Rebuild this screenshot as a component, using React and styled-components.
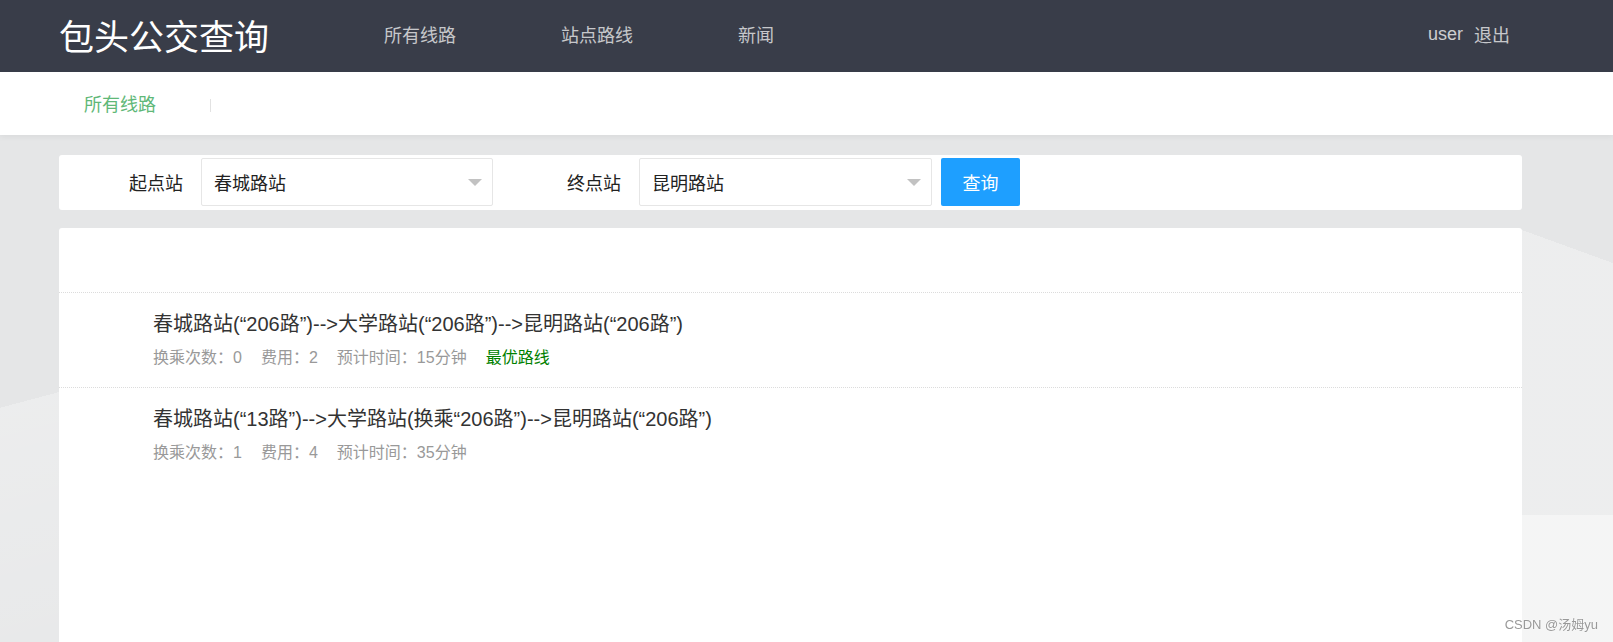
import React from 'react';
import styled, { createGlobalStyle } from 'styled-components';

const GlobalStyle = createGlobalStyle`
    html, body {
        margin: 0;
        padding: 0;
    }
    body {
        font-family: "Liberation Sans", "Noto Sans CJK SC", sans-serif;
        color: #333;
        min-height: 642px;
        background:
            linear-gradient(rgba(255, 255, 255, 0.6), rgba(255, 255, 255, 0.6)) right bottom / 91px 127px no-repeat,
            linear-gradient(200deg, transparent 48%, rgba(255, 255, 255, 0.3) 48%) right top / 91px 515px no-repeat,
            linear-gradient(165deg, transparent 62%, rgba(255, 255, 255, 0.28) 62%, rgba(255, 255, 255, 0.12) 100%) left top / 59px 642px no-repeat,
            #e5e6e7;
        background-attachment: fixed;
    }
`;

const Header = styled.header`
    height: 72px;
    background: #393d49;
    display: flex;
    align-items: center;
    padding: 0 103px 4px 59px;
    box-sizing: border-box;
`;

const Logo = styled.div`
    font-size: 35px;
    color: #fff;
    margin-right: 115px;
    white-space: nowrap;
`;

const Nav = styled.nav`
    display: flex;
    align-items: center;
    gap: 105px;
`;

const NavItem = styled.a`
    font-size: 18px;
    color: rgba(255, 255, 255, 0.72);
    text-decoration: none;
    cursor: pointer;
`;

const UserBox = styled.div`
    margin-left: auto;
    display: flex;
    align-items: center;
    gap: 11px;
    font-size: 18px;
    color: rgba(255, 255, 255, 0.75);
`;

const SubBar = styled.div`
    height: 63px;
    background: #fff;
    display: flex;
    align-items: center;
    padding-left: 84px;
    box-shadow: 0 2px 6px rgba(0, 0, 0, 0.05);
`;

const SubTab = styled.span`
    font-size: 18px;
    color: #5fb878;
    padding-bottom: 2px;
`;

const SubDivider = styled.span`
    width: 1px;
    height: 13px;
    background: #e2e2e2;
    margin-left: 54px;
    margin-top: 4px;
`;

const Main = styled.main`
    width: 1463px;
    margin-left: 59px;
    padding-top: 20px;
`;

const SearchCard = styled.form`
    height: 55px;
    background: #fff;
    border-radius: 3px;
    display: flex;
    align-items: center;
    padding-bottom: 1px;
    box-sizing: border-box;
`;

const FieldLabel = styled.label`
    width: ${(p) => p.$width}px;
    padding-right: 18px;
    text-align: right;
    font-size: 18px;
    color: #222;
`;

const Select = styled.div`
    width: ${(p) => p.$width}px;
    height: 48px;
    box-sizing: border-box;
    border: 1px solid #e6e6e6;
    border-radius: 2px;
    display: flex;
    align-items: center;
    justify-content: space-between;
    padding: 0 10px 0 12px;
    font-size: 18px;
    color: #222;
    cursor: pointer;
`;

const Caret = styled.span`
    width: 0;
    height: 0;
    border-left: 7.5px solid transparent;
    border-right: 7.5px solid transparent;
    border-top: 7px solid #c2c2c2;
    margin-top: 1px;
`;

const QueryButton = styled.button`
    width: 79px;
    height: 48px;
    margin-left: 9px;
    border: none;
    border-radius: 2px;
    background: #1e9fff;
    color: #fff;
    font-family: inherit;
    font-size: 18px;
    cursor: pointer;
`;

const ResultCard = styled.section`
    margin-top: 18px;
    min-height: 420px;
    background: #fff;
    border-radius: 3px 3px 0 0;
`;

const ResultHead = styled.div`
    height: 64px;
`;

const RouteRow = styled.div`
    border-top: 1px dotted #dcdcdc;
    padding: 16px 0 17px 94px;
`;

const RouteTitle = styled.div`
    font-size: 20px;
    line-height: 30px;
    color: #333;
`;

const RouteMeta = styled.div`
    margin-top: 7px;
    font-size: 16px;
    line-height: 24px;
    color: #999;
    display: flex;
    gap: 19px;
`;

const BestTag = styled.span`
    color: #008000;
`;

const Watermark = styled.div`
    position: fixed;
    right: 15px;
    bottom: 9px;
    font-size: 13px;
    color: #999;
    text-shadow: 0 0 2px #fff;
`;

const routes = [
    {
        path: '春城路站(“206路”)-->大学路站(“206路”)-->昆明路站(“206路”)',
        transfers: 0,
        cost: 2,
        minutes: 15,
        best: true,
    },
    {
        path: '春城路站(“13路”)-->大学路站(换乘“206路”)-->昆明路站(“206路”)',
        transfers: 1,
        cost: 4,
        minutes: 35,
        best: false,
    },
];

export default function App() {
    return (
        <>
            <GlobalStyle />
            <Header>
                <Logo>包头公交查询</Logo>
                <Nav>
                    <NavItem>所有线路</NavItem>
                    <NavItem>站点路线</NavItem>
                    <NavItem>新闻</NavItem>
                </Nav>
                <UserBox>
                    <span>user</span>
                    <NavItem>退出</NavItem>
                </UserBox>
            </Header>
            <SubBar>
                <SubTab>所有线路</SubTab>
                <SubDivider />
            </SubBar>
            <Main>
                <SearchCard onSubmit={(e) => e.preventDefault()}>
                    <FieldLabel $width={124}>起点站</FieldLabel>
                    <Select $width={292}>
                        <span>春城路站</span>
                        <Caret />
                    </Select>
                    <FieldLabel $width={128}>终点站</FieldLabel>
                    <Select $width={293}>
                        <span>昆明路站</span>
                        <Caret />
                    </Select>
                    <QueryButton type="submit">查询</QueryButton>
                </SearchCard>
                <ResultCard>
                    <ResultHead />
                    {routes.map((r) => (
                        <RouteRow key={r.path}>
                            <RouteTitle>{r.path}</RouteTitle>
                            <RouteMeta>
                                <span>换乘次数：{r.transfers}</span>
                                <span>费用：{r.cost}</span>
                                <span>预计时间：{r.minutes}分钟</span>
                                {r.best && <BestTag>最优路线</BestTag>}
                            </RouteMeta>
                        </RouteRow>
                    ))}
                </ResultCard>
            </Main>
            <Watermark>CSDN @汤姆yu</Watermark>
        </>
    );
}
